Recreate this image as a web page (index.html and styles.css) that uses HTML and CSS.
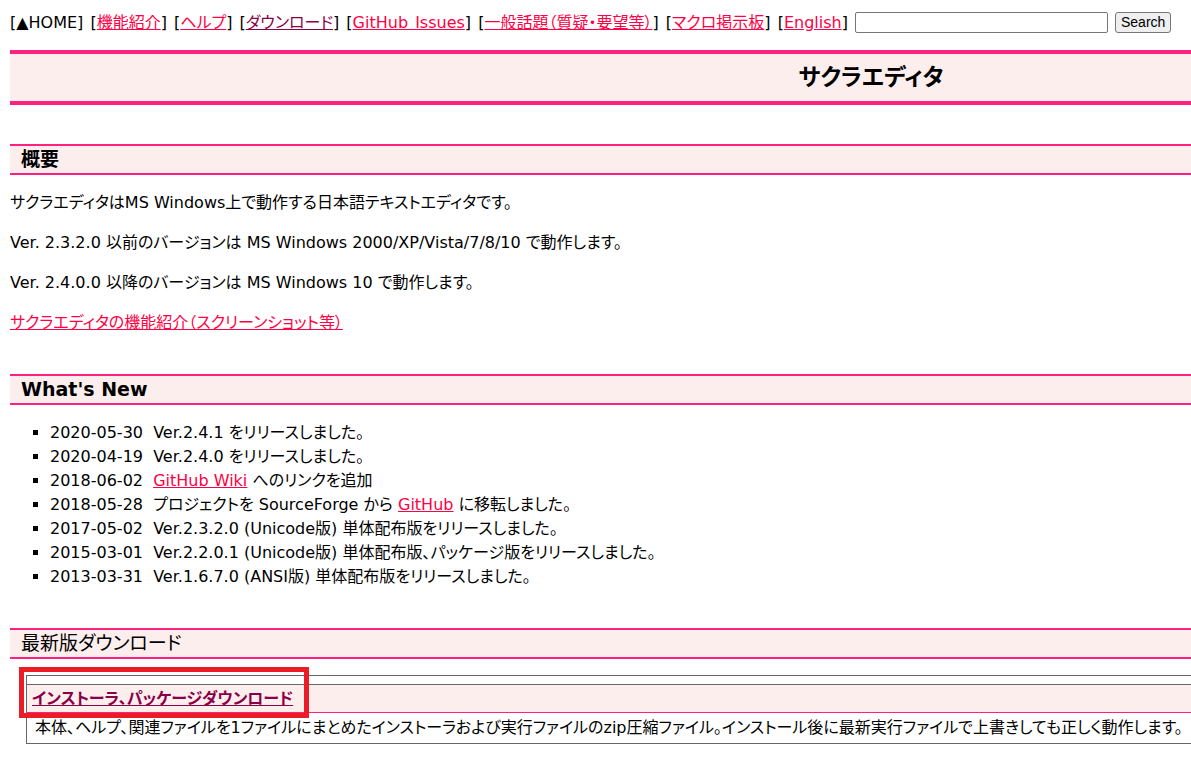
FILE: index.html
```html
<!DOCTYPE html>
<html lang="ja">
<head>
<meta charset="utf-8">
<title>サクラエディタ</title>
<link rel="stylesheet" href="styles.css">
</head>
<body>

<div class="topnav">
  [▲HOME] [<a href="#">機能紹介</a>] [<a href="#">ヘルプ</a>] [<a class="visited" href="#">ダウンロード</a>] [<a href="#">GitHub Issues</a>] [<a href="#">一般話題（質疑・要望等）</a>] [<a href="#">マクロ掲示板</a>] [<a href="#">English</a>]
  <input type="text" class="search-box"><button type="button" class="search-btn">Search</button>
</div>

<h1 class="site-title">サクラエディタ</h1>

<h2 class="section-title">概要</h2>
<p>サクラエディタはMS Windows上で動作する日本語テキストエディタです。</p>
<p>Ver. 2.3.2.0 以前のバージョンは MS Windows 2000/XP/Vista/7/8/10 で動作します。</p>
<p>Ver. 2.4.0.0 以降のバージョンは MS Windows 10 で動作します。</p>
<p><a href="#">サクラエディタの機能紹介（スクリーンショット等）</a></p>

<h2 class="section-title">What's New</h2>
<ul class="news">
  <li>2020-05-30&nbsp; Ver.2.4.1 をリリースしました。</li>
  <li>2020-04-19&nbsp; Ver.2.4.0 をリリースしました。</li>
  <li>2018-06-02&nbsp; <a href="#">GitHub Wiki</a> へのリンクを追加</li>
  <li>2018-05-28&nbsp; プロジェクトを SourceForge から <a href="#">GitHub</a> に移転しました。</li>
  <li>2017-05-02&nbsp; Ver.2.3.2.0 (Unicode版) 単体配布版をリリースしました。</li>
  <li>2015-03-01&nbsp; Ver.2.2.0.1 (Unicode版) 単体配布版、パッケージ版をリリースしました。</li>
  <li>2013-03-31&nbsp; Ver.1.6.7.0 (ANSI版) 単体配布版をリリースしました。</li>
</ul>

<h2 class="section-title plain">最新版ダウンロード</h2>
<div class="download">
  <table class="dl-table">
    <tr><td class="spacer"></td></tr>
    <tr><th><a class="visited" href="#">インストーラ、パッケージダウンロード</a></th></tr>
    <tr><td class="desc">本体、ヘルプ、関連ファイルを1ファイルにまとめたインストーラおよび実行ファイルのzip圧縮ファイル。インストール後に最新実行ファイルで上書きしても正しく動作します。</td></tr>
  </table>
  <div class="highlight"></div>
</div>

</body>
</html>
```

FILE: styles.css
```css
html {
  overflow: hidden;
}

body {
  margin: 10px;
  width: 1722px;
  font-family: "DejaVu Sans", "Noto Sans CJK JP", sans-serif;
  font-size: 16px;
  line-height: 24px;
  color: #000;
  background: #fff;
  font-feature-settings: "palt";
}

a {
  color: #ff0044;
}

a.visited {
  color: #8a0048;
}

.topnav {
  padding-top: 1px;
  line-height: 24px;
  word-spacing: 2px;
}

.search-box {
  width: 253px;
  height: 21px;
  box-sizing: border-box;
  border: 1px solid #767676;
  border-radius: 2px;
  vertical-align: 1px;
}

.search-btn {
  margin-left: 7px;
  height: 21px;
  padding: 0 5px;
  font-family: "Liberation Sans", Arial, sans-serif;
  font-size: 14px;
  word-spacing: 0;
  background: #efefef;
  border: 1px solid #767676;
  border-radius: 3px;
  vertical-align: 1px;
}

.site-title {
  margin: 15px 0 0;
  border-top: 4px solid #ff2080;
  border-bottom: 4px solid #ff2080;
  background: #fdeeee;
  text-align: center;
  font-size: 23px;
  line-height: 47px;
  font-weight: bold;
}

.section-title {
  margin: 39px 0 16px;
  padding: 0 11px;
  border-top: 2px solid #ff2080;
  border-bottom: 2px solid #ff2080;
  background: #fdeeee;
  font-size: 19px;
  line-height: 27px;
  font-weight: bold;
}

.section-title.plain {
  font-weight: normal;
}

p {
  margin: 16px 0;
}

.news {
  margin: 16px 0;
  padding-left: 40px;
  list-style: square;
}

.download {
  position: relative;
  margin: 16px 0 0 16px;
}

.dl-table {
  width: 100%;
  border-collapse: collapse;
  border: 1px solid #666;
}

.dl-table td,
.dl-table th {
  padding: 0;
}

.dl-table .spacer {
  height: 8px;
  border-bottom: 1px solid #666;
}

.dl-table th {
  text-align: left;
  padding: 0 5px;
  line-height: 27px;
  background: #fdeeee;
  border-bottom: 1px solid #ff2080;
}

.dl-table .desc {
  padding: 0 8px;
  line-height: 30px;
}

.highlight {
  position: absolute;
  left: -7px;
  top: -8px;
  width: 290px;
  height: 51px;
  box-sizing: border-box;
  border: 5px solid #ec1c24;
}
```
